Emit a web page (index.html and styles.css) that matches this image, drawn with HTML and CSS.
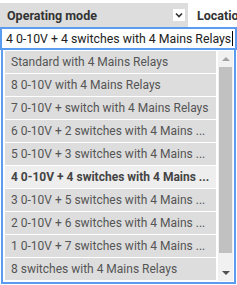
FILE: index.html
```html
<!DOCTYPE html>
<html lang="en">
<head>
    <meta charset="UTF-8">
    <meta name="viewport" content="width=device-width, initial-scale=1.0">
    <title>Operating mode</title>
    <link rel="stylesheet" href="styles.css">
</head>
<body>
    <div class="grid-head">
        <div class="col col-mode">
            <span class="col-title">Operating mode</span>
            <span class="sort-btn">
                <svg width="10" height="10" viewBox="0 0 10 10"><path d="M2 3.5 L5 6.5 L8 3.5" fill="none" stroke="#333" stroke-width="1.6"/></svg>
            </span>
        </div>
        <div class="col col-loc">Location</div>
    </div>
    <div class="editor">
        <span class="edit-text">4 0-10V + 4 switches with 4 Mains Relays</span><span class="caret"></span>
    </div>
    <div class="dropdown">
        <ul class="options">
            <li>Standard with 4 Mains Relays</li>
            <li>8 0-10V with 4 Mains Relays</li>
            <li>7 0-10V + switch with 4 Mains Relays</li>
            <li>6 0-10V + 2 switches with 4 Mains ...</li>
            <li>5 0-10V + 3 switches with 4 Mains ...</li>
            <li class="selected">4 0-10V + 4 switches with 4 Mains ...</li>
            <li>3 0-10V + 5 switches with 4 Mains ...</li>
            <li>2 0-10V + 6 switches with 4 Mains ...</li>
            <li>1 0-10V + 7 switches with 4 Mains ...</li>
            <li>8 switches with 4 Mains Relays</li>
        </ul>
        <div class="scrollbar">
            <span class="arrow up"></span>
            <div class="thumb"></div>
            <span class="arrow down"></span>
        </div>
    </div>
</body>
</html>
```

FILE: styles.css
```css
body {
    margin: 0;
    font-family: 'Roboto', 'Liberation Sans', sans-serif;
    font-size: 12px;
    color: #333;
    background-color: #fff;
    width: 237px;
    overflow: hidden;
}
.grid-head {
    display: flex;
    margin-top: 3px;
    height: 24px;
    white-space: nowrap;
}
.col {
    display: flex;
    align-items: center;
    font-weight: bold;
    font-size: 12.5px;
    color: #333;
}
.col-mode {
    width: 188px;
    flex-shrink: 0;
    background-color: #ddd;
    padding-left: 7px;
    box-sizing: border-box;
}
.col-title {
    flex: 1;
}
.sort-btn {
    width: 12px;
    height: 12px;
    background-color: #fff;
    display: flex;
    justify-content: center;
    align-items: center;
    margin-right: 3px;
}
.col-loc {
    padding-left: 9px;
    overflow: hidden;
}
.editor {
    height: 23px;
    border: 2px solid #5b9bf0;
    box-sizing: border-box;
    display: flex;
    align-items: center;
    padding-left: 4px;
    color: #222;
    white-space: nowrap;
    width: 237px;
    font-size: 12.3px;
}
.caret {
    display: inline-block;
    width: 1px;
    height: 15px;
    background-color: #000;
    margin-left: 1px;
}
.dropdown {
    display: flex;
    margin: 0 1px;
    border: 2px solid #5b9bf0;
    border-top: none;
    background-color: #fff;
    height: 234px;
    box-sizing: border-box;
    padding: 1px 1px 1px 2px;
}
.options {
    list-style: none;
    margin: 0;
    padding: 0;
    flex: 1;
    min-width: 0;
}
.options li {
    height: 22px;
    line-height: 22px;
    margin-bottom: 1px;
    background-color: #ddd;
    color: #555;
    padding-left: 6px;
    border-right: 1px solid #fff;
    white-space: nowrap;
    overflow: hidden;
}
.options li.selected {
    background-color: #eee;
    font-weight: bold;
    color: #444;
}
.scrollbar {
    width: 15px;
    margin-left: 1px;
    background-color: #f1f1f1;
    display: flex;
    flex-direction: column;
    align-items: center;
}
.arrow {
    width: 0;
    height: 0;
    border-left: 4px solid transparent;
    border-right: 4px solid transparent;
    margin: 6px 0;
}
.arrow.up {
    border-bottom: 4px solid #a3a3a3;
}
.arrow.down {
    border-top: 4px solid #505050;
}
.thumb {
    flex: 1;
    width: 13px;
    background-color: #c1c1c1;
    margin-bottom: 12px;
}
```
